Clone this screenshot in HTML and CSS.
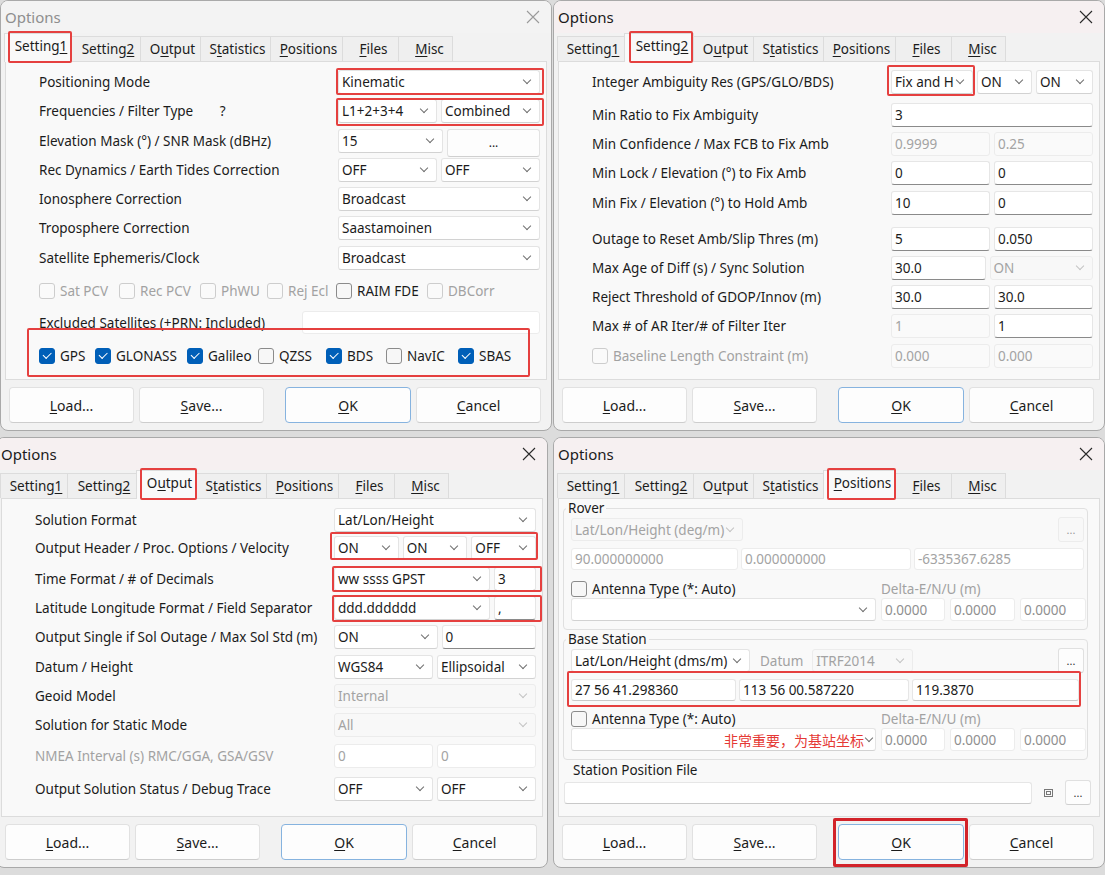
FILE: index.html
```html
<!DOCTYPE html>
<html lang="en">
<head>
<meta charset="utf-8">
<title>Options</title>
<link rel="stylesheet" href="styles.css">
</head>
<body>
<div class="desk">

<!-- ===================== Window 1: Setting1 ===================== -->
<section class="win inactive">
  <header class="titlebar"><span class="title">Options</span><svg class="close" viewBox="0 0 14 14"><path d="M1 1L13 13M13 1L1 13"/></svg></header>
  <nav class="tabs">
    <span class="tab sel"><span class="tl mark mk-tab">Setting<u>1</u></span></span>
    <span class="tab"><span class="tl">Setting<u>2</u></span></span>
    <span class="tab"><span class="tl">O<u>u</u>tput</span></span>
    <span class="tab"><span class="tl">S<u>t</u>atistics</span></span>
    <span class="tab"><span class="tl"><u>P</u>ositions</span></span>
    <span class="tab"><span class="tl"><u>F</u>iles</span></span>
    <span class="tab"><span class="tl"><u>M</u>isc</span></span>
  </nav>
  <div class="panel form pt7">
    <div class="row"><span class="lbl">Positioning Mode</span><div class="ctls mark mk-1a"><span class="ctl combo">Kinematic</span></div></div>
    <div class="row g4"><span class="lbl">Frequencies / Filter Type <span class="q">?</span></span><div class="ctls mark mk-1b"><span class="ctl combo">L1+2+3+4</span><span class="ctl combo">Combined</span></div></div>
    <div class="row g5"><span class="lbl">Elevation Mask (°) / SNR Mask (dBHz)</span><div class="ctls"><span class="ctl combo">15</span><span class="ctl pbtn">...</span></div></div>
    <div class="row g4"><span class="lbl">Rec Dynamics / Earth Tides Correction</span><div class="ctls"><span class="ctl combo">OFF</span><span class="ctl combo">OFF</span></div></div>
    <div class="row g4"><span class="lbl">Ionosphere Correction</span><div class="ctls"><span class="ctl combo">Broadcast</span></div></div>
    <div class="row g4"><span class="lbl">Troposphere Correction</span><div class="ctls"><span class="ctl combo">Saastamoinen</span></div></div>
    <div class="row g5"><span class="lbl">Satellite Ephemeris/Clock</span><div class="ctls"><span class="ctl combo">Broadcast</span></div></div>
    <div class="crow opts g8">
      <span class="chk dis"><span class="cb"></span>Sat PCV</span>
      <span class="chk dis"><span class="cb"></span>Rec PCV</span>
      <span class="chk dis"><span class="cb"></span>PhWU</span>
      <span class="chk dis"><span class="cb"></span>Rej Ecl</span>
      <span class="chk"><span class="cb"></span>RAIM FDE</span>
      <span class="chk dis"><span class="cb"></span>DBCorr</span>
    </div>
    <div class="row wide g7"><span class="lbl">Excluded Satellites (+PRN: Included)</span><div class="ctls"><span class="ctl plain"></span></div></div>
    <div class="crow sats g8 mark mk-sats">
      <span class="chk"><span class="cb on"></span>GPS</span>
      <span class="chk"><span class="cb on"></span>GLONASS</span>
      <span class="chk"><span class="cb on"></span>Galileo</span>
      <span class="chk"><span class="cb"></span>QZSS</span>
      <span class="chk"><span class="cb on"></span>BDS</span>
      <span class="chk"><span class="cb"></span>NavIC</span>
      <span class="chk"><span class="cb on"></span>SBAS</span>
    </div>
  </div>
  <footer class="btns">
    <span class="btn"><span><u>L</u>oad...</span></span>
    <span class="btn sp5"><span><u>S</u>ave...</span></span>
    <span class="btn def sp21"><span><u>O</u>K</span></span>
    <span class="btn sp5"><span><u>C</u>ancel</span></span>
  </footer>
</section>

<!-- ===================== Window 2: Setting2 ===================== -->
<section class="win">
  <header class="titlebar"><span class="title">Options</span><svg class="close" viewBox="0 0 14 14"><path d="M1 1L13 13M13 1L1 13"/></svg></header>
  <nav class="tabs">
    <span class="tab"><span class="tl">Setting<u>1</u></span></span>
    <span class="tab sel"><span class="tl mark mk-tab">Setting<u>2</u></span></span>
    <span class="tab"><span class="tl">O<u>u</u>tput</span></span>
    <span class="tab"><span class="tl">S<u>t</u>atistics</span></span>
    <span class="tab"><span class="tl"><u>P</u>ositions</span></span>
    <span class="tab"><span class="tl"><u>F</u>iles</span></span>
    <span class="tab"><span class="tl"><u>M</u>isc</span></span>
  </nav>
  <div class="panel form pt7">
    <div class="row"><span class="lbl">Integer Ambiguity Res (GPS/GLO/BDS)</span><div class="ctls"><span class="ctl combo w82 mark mk-fix">Fix and H</span><span class="ctl combo w55">ON</span><span class="ctl combo">ON</span></div></div>
    <div class="row g8"><span class="lbl">Min Ratio to Fix Ambiguity</span><div class="ctls"><span class="ctl edit">3</span></div></div>
    <div class="row g4"><span class="lbl">Min Confidence / Max FCB to Fix Amb</span><div class="ctls"><span class="ctl edit dis">0.9999</span><span class="ctl edit dis">0.25</span></div></div>
    <div class="row g4"><span class="lbl">Min Lock / Elevation (°) to Fix Amb</span><div class="ctls"><span class="ctl edit">0</span><span class="ctl edit">0</span></div></div>
    <div class="row g5"><span class="lbl">Min Fix / Elevation (°) to Hold Amb</span><div class="ctls"><span class="ctl edit">10</span><span class="ctl edit">0</span></div></div>
    <div class="row g11"><span class="lbl">Outage to Reset Amb/Slip Thres (m)</span><div class="ctls"><span class="ctl edit">5</span><span class="ctl edit">0.050</span></div></div>
    <div class="row g4"><span class="lbl">Max Age of Diff (s) / Sync Solution</span><div class="ctls"><span class="ctl edit">30.0</span><span class="ctl combo dis">ON</span></div></div>
    <div class="row g4"><span class="lbl">Reject Threshold of GDOP/Innov (m)</span><div class="ctls"><span class="ctl edit">30.0</span><span class="ctl edit">30.0</span></div></div>
    <div class="row g4"><span class="lbl">Max # of AR Iter/# of Filter Iter</span><div class="ctls"><span class="ctl edit dis">1</span><span class="ctl edit">1</span></div></div>
    <div class="row g5"><span class="lbl"><span class="chk dis"><span class="cb"></span>Baseline Length Constraint (m)</span></span><div class="ctls"><span class="ctl edit dis">0.000</span><span class="ctl edit dis">0.000</span></div></div>
  </div>
  <footer class="btns">
    <span class="btn"><span><u>L</u>oad...</span></span>
    <span class="btn sp5"><span><u>S</u>ave...</span></span>
    <span class="btn def sp21"><span><u>O</u>K</span></span>
    <span class="btn sp5"><span><u>C</u>ancel</span></span>
  </footer>
</section>

<!-- ===================== Window 3: Output ===================== -->
<section class="win w3">
  <header class="titlebar"><span class="title">Options</span><svg class="close" viewBox="0 0 14 14"><path d="M1 1L13 13M13 1L1 13"/></svg></header>
  <nav class="tabs">
    <span class="tab"><span class="tl">Setting<u>1</u></span></span>
    <span class="tab"><span class="tl">Setting<u>2</u></span></span>
    <span class="tab sel"><span class="tl mark mk-tab">O<u>u</u>tput</span></span>
    <span class="tab"><span class="tl">S<u>t</u>atistics</span></span>
    <span class="tab"><span class="tl"><u>P</u>ositions</span></span>
    <span class="tab"><span class="tl"><u>F</u>iles</span></span>
    <span class="tab"><span class="tl"><u>M</u>isc</span></span>
  </nav>
  <div class="panel form pt8">
    <div class="row"><span class="lbl">Solution Format</span><div class="ctls"><span class="ctl combo">Lat/Lon/Height</span></div></div>
    <div class="row g3"><span class="lbl">Output Header / Proc. Options / Velocity</span><div class="ctls mark mk-3a"><span class="ctl combo">ON</span><span class="ctl combo">ON</span><span class="ctl combo">OFF</span></div></div>
    <div class="row g6"><span class="lbl">Time Format / # of Decimals</span><div class="ctls mark mk-3b"><span class="ctl combo w156">ww ssss GPST</span><span class="ctl edit">3</span></div></div>
    <div class="row g4"><span class="lbl">Latitude Longitude Format / Field Separator</span><div class="ctls mark mk-3c"><span class="ctl combo w156">ddd.dddddd</span><span class="ctl edit">,</span></div></div>
    <div class="row g4"><span class="lbl">Output Single if Sol Outage / Max Sol Std (m)</span><div class="ctls"><span class="ctl combo">ON</span><span class="ctl edit">0</span></div></div>
    <div class="row g5"><span class="lbl">Datum / Height</span><div class="ctls"><span class="ctl combo">WGS84</span><span class="ctl combo">Ellipsoidal</span></div></div>
    <div class="row g4"><span class="lbl">Geoid Model</span><div class="ctls"><span class="ctl combo dis">Internal</span></div></div>
    <div class="row g4"><span class="lbl">Solution for Static Mode</span><div class="ctls"><span class="ctl combo dis">All</span></div></div>
    <div class="row g6"><span class="lbl gray">NMEA Interval (s) RMC/GGA, GSA/GSV</span><div class="ctls"><span class="ctl edit dis white">0</span><span class="ctl edit dis white">0</span></div></div>
    <div class="row g8"><span class="lbl">Output Solution Status / Debug Trace</span><div class="ctls"><span class="ctl combo">OFF</span><span class="ctl combo">OFF</span></div></div>
  </div>
  <footer class="btns">
    <span class="btn"><span><u>L</u>oad...</span></span>
    <span class="btn sp5"><span><u>S</u>ave...</span></span>
    <span class="btn def sp21"><span><u>O</u>K</span></span>
    <span class="btn sp5"><span><u>C</u>ancel</span></span>
  </footer>
</section>

<!-- ===================== Window 4: Positions ===================== -->
<section class="win">
  <header class="titlebar"><span class="title">Options</span><svg class="close" viewBox="0 0 14 14"><path d="M1 1L13 13M13 1L1 13"/></svg></header>
  <nav class="tabs">
    <span class="tab"><span class="tl">Setting<u>1</u></span></span>
    <span class="tab"><span class="tl">Setting<u>2</u></span></span>
    <span class="tab"><span class="tl">O<u>u</u>tput</span></span>
    <span class="tab"><span class="tl">S<u>t</u>atistics</span></span>
    <span class="tab sel"><span class="tl mark mk-tab"><u>P</u>ositions</span></span>
    <span class="tab"><span class="tl"><u>F</u>iles</span></span>
    <span class="tab"><span class="tl"><u>M</u>isc</span></span>
  </nav>
  <div class="panel pos">
    <fieldset class="grp">
      <legend>Rover</legend>
      <div class="ga"><span class="ctl combo dis w172">Lat/Lon/Height (deg/m)</span><span class="dots dis">...</span></div>
      <div class="gb"><span class="ctl edit dis white">90.000000000</span><span class="ctl edit dis white">0.000000000</span><span class="ctl edit dis white">-6335367.6285</span></div>
      <div class="gc"><span class="chk"><span class="cb"></span>Antenna Type (*: Auto)</span><span class="delta">Delta-E/N/U (m)</span></div>
      <div class="gd"><span class="ctl combo"></span><span class="ctl edit dis white mid">0.0000</span><span class="ctl edit dis white mid">0.0000</span><span class="ctl edit dis white mid">0.0000</span></div>
    </fieldset>
    <fieldset class="grp">
      <legend>Base Station</legend>
      <div class="ga"><span class="ctl combo w179">Lat/Lon/Height (dms/m)</span><span class="datum">Datum</span><span class="ctl combo dis w101">ITRF2014</span><span class="dots">...</span></div>
      <div class="gb base mark mk-base"><span class="ctl edit soft">27 56 41.298360</span><span class="ctl edit soft">113 56 00.587220</span><span class="ctl edit soft">119.3870</span></div>
      <div class="gc"><span class="chk"><span class="cb"></span>Antenna Type (*: Auto)</span><span class="delta">Delta-E/N/U (m)</span></div>
      <div class="gd"><span class="ctl combo note"><span class="cn">非常重要，为基站坐标</span></span><span class="ctl edit dis white mid">0.0000</span><span class="ctl edit dis white mid">0.0000</span><span class="ctl edit dis white mid">0.0000</span></div>
    </fieldset>
    <div class="spf">Station Position File</div>
    <div class="spf-row"><span class="ctl edit soft"></span><svg class="ficon" viewBox="0 0 9 8"><rect x="0.5" y="0.5" width="8" height="7"/><rect x="2.5" y="2.5" width="4" height="3"/></svg><span class="dots">...</span></div>
  </div>
  <footer class="btns">
    <span class="btn"><span><u>L</u>oad...</span></span>
    <span class="btn sp5"><span><u>S</u>ave...</span></span>
    <span class="btn def sp21 mark mk-ok"><span><u>O</u>K</span></span>
    <span class="btn sp5"><span><u>C</u>ancel</span></span>
  </footer>
</section>

</div>
</body>
</html>
```

FILE: styles.css
```css
* { box-sizing: border-box; }

body {
  margin: 0;
  background: #e6e6e6;
  font-family: "Noto Sans", "Open Sans", "Noto Sans CJK SC", sans-serif;
  font-size: 13.5px;
  color: #1b1b1b;
}

u { text-decoration: underline; text-underline-offset: 2px; text-decoration-thickness: 1px; }

.desk {
  width: 1105px;
  height: 875px;
  overflow: hidden;
  display: grid;
  grid-template-columns: 552px 552px;
  grid-template-rows: 431px 431px;
  column-gap: 1px;
  row-gap: 6px;
  background: #dcdcdc;
}

/* ---------- window chrome ---------- */
.win {
  width: 552px;
  background: #f2f2f2;
  border: 1px solid #a9a9a9;
  border-radius: 8px;
  display: flex;
  flex-direction: column;
  overflow: hidden;
}
.w3 { margin-left: -4px; }

.titlebar {
  height: 32px;
  flex: none;
  display: flex;
  align-items: center;
  justify-content: space-between;
  padding: 0 11px 0 4px;
  background: #f6f0f1;
}
.title { font-size: 15px; color: #1b1b1b; }
.close { width: 14px; height: 14px; fill: none; stroke: #2a2a2a; stroke-width: 1.1; }
.inactive .titlebar { background: #f3f3f3; }
.inactive .title { color: #8e8e8e; }
.inactive .close { stroke: #9a9a9a; }

/* ---------- tabs ---------- */
.tabs {
  height: 28px;
  flex: none;
  display: flex;
  align-items: flex-end;
  padding-left: 3px;
}
.tab {
  height: 25px;
  flex: none;
  display: flex;
  align-items: center;
  justify-content: center;
  padding-left: 4px;
  background: #efefef;
  border: 1px solid #dcdcdc;
  border-bottom: none;
  margin-right: -1px;
  font-size: 13.5px;
}
.tab:nth-child(1) { width: 68px; }
.tab:nth-child(2) { width: 70px; }
.tab:nth-child(3) { width: 61px; }
.tab:nth-child(4) { width: 71px; }
.tab:nth-child(5) { width: 73px; }
.tab:nth-child(6) { width: 57px; padding-left: 6px; }
.tab:nth-child(7) { width: 55px; padding-left: 8px; }
.tab.sel {
  height: 29px;
  margin-bottom: -1px;
  padding-bottom: 4px;
  padding-left: 6px;
  background: #f9f9f9;
  position: relative;
  z-index: 1;
}
.tl { line-height: 18px; white-space: nowrap; }

/* ---------- panel & form rows ---------- */
.panel {
  height: 319px;
  flex: none;
  margin: 0 4px;
  background: #f9f9f9;
  border: 1px solid #dcdcdc;
}
.pt7 { padding-top: 7px; }
.pt8 { padding-top: 8px; }

.row {
  height: 25px;
  display: grid;
  grid-template-columns: 1fr 202px;
  align-items: center;
  padding: 0 6px 0 33px;
}
.row.wide { grid-template-columns: 1fr 238px; }
.lbl { white-space: nowrap; }
.lbl.gray, .gray { color: #a2a2a2; }
.q { margin-left: 23px; }

.g3 { margin-top: 3px; }
.g4 { margin-top: 4px; }
.g5 { margin-top: 5px; }
.g6 { margin-top: 6px; }
.g7 { margin-top: 7px; }
.g8 { margin-top: 8px; }
.g11 { margin-top: 11px; }

.ctls {
  display: flex;
  gap: 4px;
  height: 24px;
}

/* ---------- controls ---------- */
.ctl {
  flex: 1 1 0;
  min-width: 0;
  height: 24px;
  display: flex;
  align-items: center;
  padding-left: 3px;
  white-space: nowrap;
  font-size: 13.5px;
  border-radius: 3px;
}
.w82 { flex: 0 0 82px; }
.w55 { flex: 0 0 55px; }
.w156 { flex: 0 0 156px; }

.combo {
  background: #ffffff;
  border: 1px solid #e4e4e4;
  border-bottom-color: #d2d2d2;
  padding-right: 9px;
}
.combo::after {
  content: "";
  flex: none;
  width: 5px;
  height: 5px;
  margin-left: auto;
  border-right: 1px solid #707070;
  border-bottom: 1px solid #707070;
  transform: translateY(-2px) rotate(45deg);
}
.combo.dis {
  background: #f8f8f8;
  border-color: #ececec;
  color: #a3a3a3;
}
.combo.dis::after { border-color: #c3c3c3; }

.edit {
  background: #ffffff;
  border: 1px solid #e6e6e6;
  border-bottom: 1px solid #8a8a8a;
}
.edit.soft { border-bottom-color: #c9c9c9; }
.edit.dis {
  background: #fafafa;
  border-color: #ececec;
  color: #a3a3a3;
}
.edit.dis.white { background: #ffffff; }
.edit.mid { color: #8f8f8f; }

.plain {
  background: #ffffff;
  border: 1px solid #ececec;
  height: 23px;
}

.pbtn {
  height: 28px;
  align-self: center;
  margin-top: 4px;
  justify-content: center;
  padding: 0;
  background: #fdfdfd;
  border: 1px solid #e2e2e2;
  border-bottom-color: #d0d0d0;
  font-size: 12px;
}

/* ---------- checkboxes ---------- */
.crow {
  height: 25px;
  display: grid;
  align-items: center;
  padding-left: 33px;
}
.opts { grid-template-columns: 80px 81px 67px 69px 91px 1fr; }
.sats { grid-template-columns: 56px 92px 71px 68px 60px 72px 1fr; }

.chk {
  display: flex;
  align-items: center;
  gap: 5px;
  white-space: nowrap;
}
.cb {
  width: 16px;
  height: 16px;
  flex: none;
  border: 1px solid #8b8b8b;
  border-radius: 3px;
  background: #f7f7f7;
  display: inline-flex;
  align-items: center;
  justify-content: center;
}
.cb.on {
  background: #005fb8;
  border-color: #005fb8;
}
.cb.on::after {
  content: "";
  width: 7px;
  height: 3.5px;
  border-left: 1.3px solid #ffffff;
  border-bottom: 1.3px solid #ffffff;
  transform: translateY(-1px) rotate(-45deg);
}
.chk.dis { color: #a2a2a2; }
.chk.dis .cb { border-color: #cdcdcd; background: #fafafa; }

/* ---------- positions tab ---------- */
.pos { padding-top: 0; }
.grp {
  margin: 0 11px 0 4px;
  padding: 0 3px 8px 7px;
  border: 1px solid #e0e0e0;
  border-radius: 4px;
  min-width: 0;
}
.grp legend {
  margin-left: -5px;
  padding: 0 2px;
  line-height: 18px;
  font-size: 13.5px;
}
.pos .ctl { height: 22px; }
.ga {
  height: 25px;
  display: flex;
  align-items: center;
}
.ga .combo { height: 23px; }
.w172 { flex: 0 0 172px; }
.w179 { flex: 0 0 179px; }
.w101 { flex: 0 0 101px; }
.datum { color: #a2a2a2; margin: 0 9px 0 10px; }
.dots {
  width: 26px;
  height: 25px;
  margin-left: auto;
  display: flex;
  align-items: center;
  justify-content: center;
  background: #fdfdfd;
  border: 1px solid #e0e0e0;
  border-bottom-color: #cfcfcf;
  border-radius: 3px;
  font-size: 11px;
  color: #333333;
}
.dots.dis { background: #f8f8f8; border-color: #ececec; color: #9a9a9a; }

.gb {
  margin-top: 6px;
  height: 22px;
  display: grid;
  grid-template-columns: 167px 170px 1fr;
  column-gap: 3px;
}
.gb.base { grid-template-columns: 165px 170px 167px; }
.gc {
  margin-top: 10px;
  height: 18px;
  display: grid;
  grid-template-columns: 310px 1fr;
  align-items: center;
}
.base + .gc { margin-top: 9px; }
.delta { color: #a2a2a2; }
.gd {
  height: 23px;
  display: grid;
  grid-template-columns: 305px 64px 65px 66px;
  column-gap: 5px;
}
.gd .ctl { height: 23px; }
.note { padding-right: 3px; }
.note .cn { margin-left: auto; }
.note::after { margin-left: 2px; }
.cn {
  color: #e53935;
  font-family: "Noto Sans CJK SC", sans-serif;
  font-size: 14px;
}
.spf {
  height: 18px;
  line-height: 18px;
  margin: 1px 0 0 14px;
}
.spf-row {
  margin: 1px 8px 0 5px;
  height: 25px;
  display: flex;
  align-items: center;
}
.spf-row .edit { flex: 1 1 auto; }
.ficon {
  width: 9px;
  height: 8px;
  margin: 0 12px 0 12px;
  fill: none;
  stroke: #777777;
  stroke-width: 1;
  flex: none;
}
.spf-row .dots { margin-left: 0; }

/* ---------- buttons ---------- */
.btns {
  flex: none;
  height: 36px;
  margin-top: 7px;
  display: flex;
  padding-left: 8px;
}
.btn {
  width: 125px;
  height: 36px;
  display: flex;
  align-items: center;
  justify-content: center;
  background: #fdfdfd;
  border: 1px solid #e1e1e1;
  border-bottom-color: #cdcdcd;
  border-radius: 4px;
  font-size: 14px;
}
.btn.def { border-color: #86b3df; width: 126px; }
.sp5 { margin-left: 5px; }
.sp21 { margin-left: 21px; }

/* ---------- red annotation boxes ---------- */
.mark { position: relative; }
.mark::before {
  content: "";
  position: absolute;
  border: 2px solid #e5403f;
  border-radius: 2px;
  pointer-events: none;
  z-index: 3;
}
.mk-tab::before { inset: -6px -5px -8px -7px; }
.mk-1a::before { inset: -2px -4px -1px -2px; }
.mk-1b::before { inset: -1px -4px -3px -2px; }
.mk-sats::before { inset: -15px 16px -9px 21px; }
.mk-fix::before { inset: -6px -3px -3px -5px; }
.mk-3a::before { inset: -4px -2px 0 -4px; }
.mk-3b::before { inset: -1px -6px -1px -2px; }
.mk-3c::before { inset: -1px -6px -2px -2px; }
.mk-base::before { inset: -8px 3px -6px -4px; }
.mk-ok::before { inset: -7px -5px -8px -6px; border: 3px solid #d2232a; }
```
